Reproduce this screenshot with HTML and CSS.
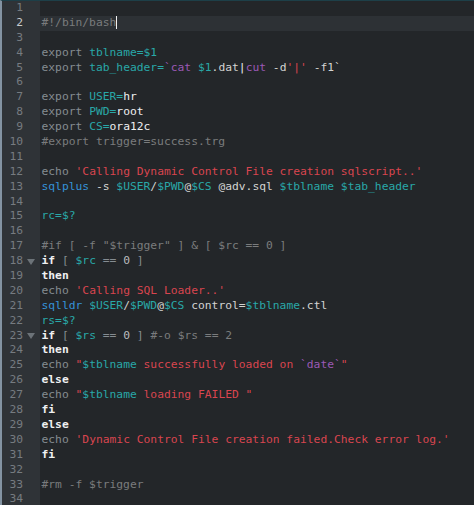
FILE: index.html
```html
<!DOCTYPE html>
<html>
<head>
<meta charset="utf-8">
<link rel="stylesheet" href="styles.css">
</head>
<body>
<div class="editor">
  <div class="row"><div class="ln"><span class="num">1</span><span class="fold"></span></div><div class="code"></div></div>
  <div class="row cur"><div class="ln"><span class="num">2</span><span class="fold"></span></div><div class="code"><span class="c">#!/bin/bash</span><span class="caret"></span></div></div>
  <div class="row"><div class="ln"><span class="num">3</span><span class="fold"></span></div><div class="code"></div></div>
  <div class="row"><div class="ln"><span class="num">4</span><span class="fold"></span></div><div class="code"><span class="b">export</span> <span class="v">tblname=$1</span></div></div>
  <div class="row"><div class="ln"><span class="num">5</span><span class="fold"></span></div><div class="code"><span class="b">export</span> <span class="v">tab_header=</span><span class="p">`cat</span> <span class="v">$1</span>.dat<span class="w">|</span><span class="p">cut</span> -d<span class="s">'|'</span> -f1`</div></div>
  <div class="row"><div class="ln"><span class="num">6</span><span class="fold"></span></div><div class="code"></div></div>
  <div class="row"><div class="ln"><span class="num">7</span><span class="fold"></span></div><div class="code"><span class="b">export</span> <span class="v">USER=</span><span class="w">hr</span></div></div>
  <div class="row"><div class="ln"><span class="num">8</span><span class="fold"></span></div><div class="code"><span class="b">export</span> <span class="v">PWD=</span><span class="w">root</span></div></div>
  <div class="row"><div class="ln"><span class="num">9</span><span class="fold"></span></div><div class="code"><span class="b">export</span> <span class="v">CS=</span><span class="w">ora12c</span></div></div>
  <div class="row"><div class="ln"><span class="num">10</span><span class="fold"></span></div><div class="code"><span class="c">#export trigger=success.trg</span></div></div>
  <div class="row"><div class="ln"><span class="num">11</span><span class="fold"></span></div><div class="code"></div></div>
  <div class="row"><div class="ln"><span class="num">12</span><span class="fold"></span></div><div class="code"><span class="b">echo</span> <span class="s">'Calling Dynamic Control File creation sqlscript..'</span></div></div>
  <div class="row"><div class="ln"><span class="num">13</span><span class="fold"></span></div><div class="code"><span class="x">sqlplus</span> -s <span class="v">$USER</span>/<span class="v">$PWD</span>@<span class="v">$CS</span> @adv.sql <span class="v">$tblname</span> <span class="v">$tab_header</span></div></div>
  <div class="row"><div class="ln"><span class="num">14</span><span class="fold"></span></div><div class="code"></div></div>
  <div class="row"><div class="ln"><span class="num">15</span><span class="fold"></span></div><div class="code"><span class="v">rc=$?</span></div></div>
  <div class="row"><div class="ln"><span class="num">16</span><span class="fold"></span></div><div class="code"></div></div>
  <div class="row"><div class="ln"><span class="num">17</span><span class="fold"></span></div><div class="code"><span class="c">#if [ -f "$trigger" ] &amp; [ $rc == 0 ]</span></div></div>
  <div class="row"><div class="ln"><span class="num">18</span><span class="fold"><svg width="8" height="6" viewBox="0 0 8 6"><polygon points="0,0 8,0 4,6" fill="#6c7378"/></svg></span></div><div class="code"><span class="k">if</span> <span class="b">[</span> <span class="v">$rc</span> <span class="b">==</span> <span class="n">0</span> <span class="b">]</span></div></div>
  <div class="row"><div class="ln"><span class="num">19</span><span class="fold"></span></div><div class="code"><span class="k">then</span></div></div>
  <div class="row"><div class="ln"><span class="num">20</span><span class="fold"></span></div><div class="code"><span class="b">echo</span> <span class="s">'Calling SQL Loader..'</span></div></div>
  <div class="row"><div class="ln"><span class="num">21</span><span class="fold"></span></div><div class="code"><span class="x">sqlldr</span> <span class="v">$USER</span>/<span class="v">$PWD</span>@<span class="v">$CS</span> control=<span class="v">$tblname</span>.ctl</div></div>
  <div class="row"><div class="ln"><span class="num">22</span><span class="fold"></span></div><div class="code"><span class="v">rs=$?</span></div></div>
  <div class="row"><div class="ln"><span class="num">23</span><span class="fold"><svg width="8" height="6" viewBox="0 0 8 6"><polygon points="0,0 8,0 4,6" fill="#6c7378"/></svg></span></div><div class="code"><span class="k">if</span> <span class="b">[</span> <span class="v">$rs</span> <span class="b">==</span> <span class="n">0</span> <span class="b">]</span> <span class="c">#-o $rs == 2</span></div></div>
  <div class="row"><div class="ln"><span class="num">24</span><span class="fold"></span></div><div class="code"><span class="k">then</span></div></div>
  <div class="row"><div class="ln"><span class="num">25</span><span class="fold"></span></div><div class="code"><span class="b">echo</span> <span class="s">"</span><span class="v">$tblname</span><span class="s"> successfully loaded on </span><span class="p">`date`</span><span class="s">"</span></div></div>
  <div class="row"><div class="ln"><span class="num">26</span><span class="fold"></span></div><div class="code"><span class="k">else</span></div></div>
  <div class="row"><div class="ln"><span class="num">27</span><span class="fold"></span></div><div class="code"><span class="b">echo</span> <span class="s">"</span><span class="v">$tblname</span><span class="s"> loading FAILED "</span></div></div>
  <div class="row"><div class="ln"><span class="num">28</span><span class="fold"></span></div><div class="code"><span class="k">fi</span></div></div>
  <div class="row"><div class="ln"><span class="num">29</span><span class="fold"></span></div><div class="code"><span class="k">else</span></div></div>
  <div class="row"><div class="ln"><span class="num">30</span><span class="fold"></span></div><div class="code"><span class="b">echo</span> <span class="s">'Dynamic Control File creation failed.Check error log.'</span></div></div>
  <div class="row"><div class="ln"><span class="num">31</span><span class="fold"></span></div><div class="code"><span class="k">fi</span></div></div>
  <div class="row"><div class="ln"><span class="num">32</span><span class="fold"></span></div><div class="code"></div></div>
  <div class="row"><div class="ln"><span class="num">33</span><span class="fold"></span></div><div class="code"><span class="c">#rm -f $trigger</span></div></div>
  <div class="row"><div class="ln"><span class="num">34</span><span class="fold"></span></div><div class="code"></div></div>
</div>
</body>
</html>
```
FILE: styles.css
```css
html, body {
  margin: 0;
  padding: 0;
  background: #232629;
  height: 100%;
  overflow: hidden;
}
.editor {
  border-left: 2px solid #8393a2;
  border-top: 1px solid #1d3f48;
  height: 100%;
  box-sizing: border-box;
  font-family: "DejaVu Sans Mono", monospace;
  font-size: 11.3px;
  color: #d3d4d2;
  background: linear-gradient(to right, #2f3337 0, #2f3337 38px, #232629 38px);
}
.row {
  display: flex;
  height: 14.9px;
  line-height: 14.9px;
  white-space: pre;
}
.ln {
  width: 38px;
  flex: none;
  display: flex;
  background: #2f3337;
  color: #767b80;
}
.num {
  width: 21px;
  text-align: right;
}
.fold {
  width: 17px;
  display: flex;
  align-items: center;
  padding-left: 4px;
  box-sizing: border-box;
}
.cur .num { color: #c8cacc; }
.code {
  flex: 1;
  padding-left: 1.5px;
}
.cur .code { background: #2d3135; }
.caret {
  display: inline-block;
  width: 1px;
  height: 13px;
  background: #eff0f1;
  vertical-align: middle;
}
.c { color: #7a7c7d; }
.b { color: #858c91; }
.v { color: #29a8a8; }
.s { color: #d9454f; }
.x { color: #3592d8; }
.p { color: #9b59b6; }
.w { color: #eff0f1; }
.k { color: #eff0f1; font-weight: bold; }
.n { color: #b8babc; }
```
